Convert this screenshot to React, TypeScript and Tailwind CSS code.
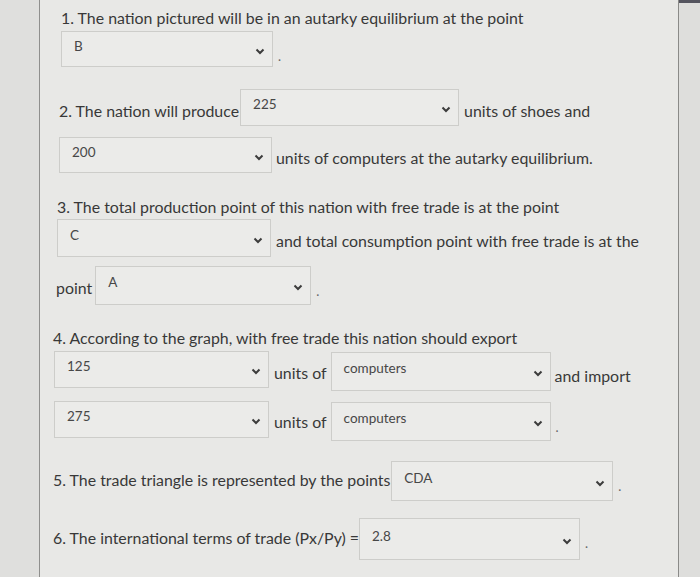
import React from 'react'

// a closed dropdown as it looks in the quiz
function Pick({ value, w, h = 37 }: { value: string; w: number; h?: number }) {
  return (
    <div
      className="flex shrink-0 items-center justify-between border border-[#cdcdca] bg-[#ebebe9] pl-[12px] pr-[7px]"
      style={{ width: w, height: h }}
    >
      <span className="-translate-y-[3px] text-[13.5px] text-[#474747]">{value}</span>
      <svg className="translate-y-[2px]" width="10" height="7" viewBox="0 0 10 7">
        <path d="M1.5 1.5 L5 5 L8.5 1.5" fill="none" stroke="#3c3c3c" strokeWidth="2" />
      </svg>
    </div>
  )
}

function Dot() {
  return <span className="ml-[5px] mt-[16px] text-[13px] text-[#666]">.</span>
}

function Label({ children, cls = '' }: { children: React.ReactNode; cls?: string }) {
  return <span className={`whitespace-nowrap text-[15.9px] text-[#383838] ${cls}`}>{children}</span>
}

export default function App() {
  return (
    <div
      className="flex h-[577px] w-[700px] overflow-hidden bg-[#e5e5e3]"
      style={{ fontFamily: 'Lato, "Open Sans", sans-serif' }}
    >
      <div className="w-[40px] shrink-0 border-r border-[#8f8f8d] bg-[#dfdfdd]" />

      <div className="flex w-[639px] shrink-0 flex-col border-r border-[#8a8a88] bg-[#e8e8e6]">
        <div className="mt-[8px] flex h-[20px] items-center pl-[21px]">
          <Label>1. The nation pictured will be in an autarky equilibrium at the point</Label>
        </div>
        <div className="mt-[3px] flex h-[36px] pl-[21px]">
          <Pick value="B" w={212} h={36} />
          <Dot />
        </div>

        <div className="mt-[22px] flex h-[37px] items-center pl-[19px]">
          <Label cls="mt-[6px]">2. The nation will produce</Label>
          <div className="ml-[1px]">
            <Pick value="225" w={219} />
          </div>
          <Label cls="ml-[5px] mt-[6px]">units of shoes and</Label>
        </div>

        <div className="mt-[11px] flex h-[36px] items-center pl-[19px]">
          <Pick value="200" w={213} h={36} />
          <Label cls="ml-[4px] mt-[6px]">units of computers at the autarky equilibrium.</Label>
        </div>

        <div className="mt-[24px] flex h-[20px] items-center pl-[17px]">
          <Label>3. The total production point of this nation with free trade is at the point</Label>
        </div>
        <div className="mt-[2px] flex h-[38px] items-center pl-[17px]">
          <Pick value="C" w={214} h={38} />
          <Label cls="ml-[5px] mt-[6px]">and total consumption point with free trade is at the</Label>
        </div>

        <div className="mt-[9px] flex h-[39px] items-center pl-[16px]">
          <Label cls="mt-[4px]">point</Label>
          <div className="ml-[3px] flex">
            <Pick value="A" w={216} h={39} />
            <Dot />
          </div>
        </div>

        <div className="mt-[23px] flex h-[20px] items-center pl-[13px]">
          <Label>4. According to the graph, with free trade this nation should export</Label>
        </div>
        <div className="mt-[2px] flex h-[39px] items-center pl-[14px]">
          <Pick value="125" w={215} h={37} />
          <Label cls="ml-[5px] mt-[6px]">units of</Label>
          <div className="ml-[4px] mt-[3px]">
            <Pick value="computers" w={220} h={39} />
          </div>
          <Label cls="ml-[4px] mt-[12px]">and import</Label>
        </div>

        <div className="mt-[10px] flex h-[40px] items-center pl-[14px]">
          <Pick value="275" w={215} h={37} />
          <Label cls="ml-[5px] mt-[6px]">units of</Label>
          <div className="ml-[4px] mt-[5px] flex">
            <Pick value="computers" w={220} h={39} />
            <Dot />
          </div>
        </div>

        <div className="mt-[22px] flex h-[40px] items-center pl-[13px]">
          <Label cls="-mt-[2px]">5. The trade triangle is represented by the points</Label>
          <div className="ml-[1px] flex">
            <Pick value="CDA" w={222} h={40} />
            <Dot />
          </div>
        </div>

        <div className="mt-[17px] flex h-[42px] items-center pl-[13px]">
          <Label cls="-mt-[3px]">6. The international terms of trade (Px/Py) =</Label>
          <div className="ml-[0px] flex">
            <Pick value="2.8" w={221} h={42} />
            <Dot />
          </div>
        </div>
      </div>

      <div className="flex-1 bg-[#dededc]">
        <div className="h-[3px] bg-[#55555f]" />
      </div>
    </div>
  )
}
